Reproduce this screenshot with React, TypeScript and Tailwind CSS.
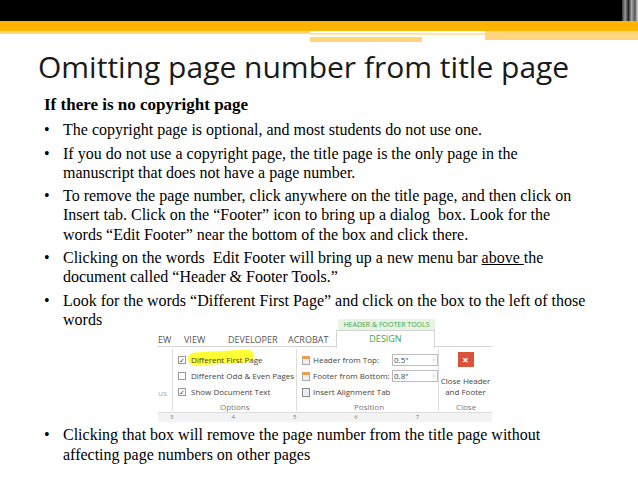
export default function App() {
  const serif = { fontFamily: '"Liberation Serif", serif' };
  const sans = { fontFamily: '"Open Sans", "Liberation Sans", sans-serif' };
  return (
    <div className="relative w-[638px] h-[478px] bg-white overflow-hidden">
      <div className="h-[21px] bg-black relative">
        <div className="absolute right-0 top-0 h-full w-[16px] bg-[linear-gradient(90deg,#333,#999,#222,#aaa,#555,#ddd)]" />
      </div>
      <div className="h-[10px] bg-[#ffb400]" />
      <div className="relative h-[12px]">
        <div className="absolute left-0 top-0 w-[310px] h-[3px] bg-[#ffd77a]" />
        <div className="absolute left-[310px] top-[2px] w-[175px] h-[2px] bg-[#ffe5a6]" />
        <div className="absolute left-[310px] top-[6px] w-[112px] h-[5px] bg-[#ffd77a]" />
        <div className="absolute left-[485px] top-0 w-[153px] h-[9px] bg-[#ffd77a]" />
      </div>
      <h1 className="ml-[38px] mt-[4px] text-[30px] leading-[40px] text-[#1a1a1a] whitespace-nowrap" style={sans}>
        Omitting page number from title page
      </h1>
      <div className="ml-[44px] mt-[8px] text-[16px] leading-[19.3px] text-black pr-[52px]" style={serif}>
        <div className="font-bold text-[17px] mb-[6px]">If there is no copyright page</div>
        {[
          <>The copyright page is optional, and most students do not use one.</>,
          <>If you do not use a copyright page, the title page is the only page in the manuscript that does not have a page number.</>,
          <>To remove the page number, click anywhere on the title page, and then click on Insert tab. Click on the “Footer” icon to bring up a dialog&nbsp; box. Look for the words “Edit Footer” near the bottom of the box and click there.</>,
          <>Clicking on the words&nbsp; Edit Footer will bring up a new menu bar <span className="underline">above </span>the document called “Header &amp; Footer Tools.”</>,
          <>Look for the words “Different First Page” and click on the box to the left of those words</>,
        ].map((t, i) => (
          <div key={i} className="flex mb-[4px]">
            <span className="w-[19px] shrink-0">•</span>
            <span>{t}</span>
          </div>
        ))}
      </div>
      <div className="relative ml-[158px] -mt-[14px] w-[334px] h-[104px] text-[9px] text-[#444] whitespace-nowrap" style={sans}>
        <div className="absolute left-[180px] top-0 w-[97px] h-[11px] bg-[#e7f4e4] text-[#3fa34d] text-[7px] leading-[11px] text-center">HEADER &amp; FOOTER TOOLS</div>
        <div className="absolute left-0 top-[11px] w-full h-[17px] border-b border-[#d4d4d4]" />
        <div className="absolute left-0 top-[14px] text-[#555]">EW</div>
        <div className="absolute left-[26px] top-[14px] text-[#555]">VIEW</div>
        <div className="absolute left-[70px] top-[14px] text-[#555]">DEVELOPER</div>
        <div className="absolute left-[130px] top-[14px] text-[#555]">ACROBAT</div>
        <div className="absolute left-[178px] top-[11px] w-[99px] h-[18px] bg-white border border-[#d4d4d4] border-b-0 text-[#3fa34d] text-center leading-[16px]">DESIGN</div>
        <div className="absolute left-[30px] top-[32px] w-[66px] h-[13px] rounded-full bg-[#ffff33] rotate-[-3deg]" />
        <div className="absolute left-[20px] top-[35px] flex flex-col gap-[4px]">
          {[
            ["Different First Page", true],
            ["Different Odd & Even Pages", false],
            ["Show Document Text", true],
          ].map(([t, c]) => (
            <div key={t as string} className="flex items-center gap-[5px] h-[12px]">
              <span className="w-[8px] h-[8px] border border-[#999] bg-white text-[7px] leading-[7px] text-center">{c ? "✓" : ""}</span>
              <span className="text-[8px]">{t as string}</span>
            </div>
          ))}
        </div>
        <div className="absolute left-0 top-[68px] text-[#aaa] text-[8px]">us</div>
        <div className="absolute left-[14px] top-[30px] h-[62px] border-l border-[#ddd]" />
        <div className="absolute left-[138px] top-[30px] h-[62px] border-l border-[#ddd]" />
        <div className="absolute left-[280px] top-[30px] h-[62px] border-l border-[#ddd]" />
        <div className="absolute left-[62px] top-[82px] text-[8px] text-[#777]">Options</div>
        <div className="absolute left-[196px] top-[82px] text-[8px] text-[#777]">Position</div>
        <div className="absolute left-[298px] top-[82px] text-[8px] text-[#777]">Close</div>
        <div className="absolute left-[144px] top-[35px] flex flex-col gap-[4px]">
          {[["Header from Top:", "0.5\""], ["Footer from Bottom:", "0.8\""]].map(([t, v]) => (
            <div key={t} className="flex items-center gap-[3px] h-[12px]">
              <span className="w-[8px] h-[9px] border border-[#aaa] bg-[#eee] border-t-[3px] border-t-[#e8a04a]" />
              <span className="text-[8px] w-[76px]">{t}</span>
              <span className="w-[46px] h-[12px] border border-[#bbb] text-[8px] leading-[10px] pl-[1px] flex justify-between pr-[2px]"><span>{v}</span><span className="text-[6px]">⁝</span></span>
            </div>
          ))}
          <div className="flex items-center gap-[3px] h-[12px]">
            <span className="w-[8px] h-[9px] border border-[#888] bg-[#e6eef8]" />
            <span className="text-[8px]">Insert Alignment Tab</span>
          </div>
        </div>
        <div className="absolute left-[281px] top-[33px] w-[53px] flex flex-col items-center">
          <div className="w-[16px] h-[15px] bg-[#d9533a] text-white text-[11px] font-bold leading-[15px] text-center">×</div>
          <div className="mt-[8px] text-center text-[8px] leading-[11px]">Close Header<br />and Footer</div>
        </div>
        <div className="absolute left-0 top-[93px] w-full h-[10px] border-t border-[#ddd] bg-[#f3f3f3] text-[6px] text-[#777] flex gap-[58px] pl-[12px]">
          <span>3</span><span>4</span><span>5</span><span>6</span><span>7</span>
        </div>
      </div>
      <div className="ml-[44px] mt-[2px] text-[16px] leading-[19.3px] text-black pr-[52px] flex" style={serif}>
        <span className="w-[19px] shrink-0">•</span>
        <span>Clicking that box will remove the page number from the title page without affecting page numbers on other pages</span>
      </div>
    </div>
  );
}
